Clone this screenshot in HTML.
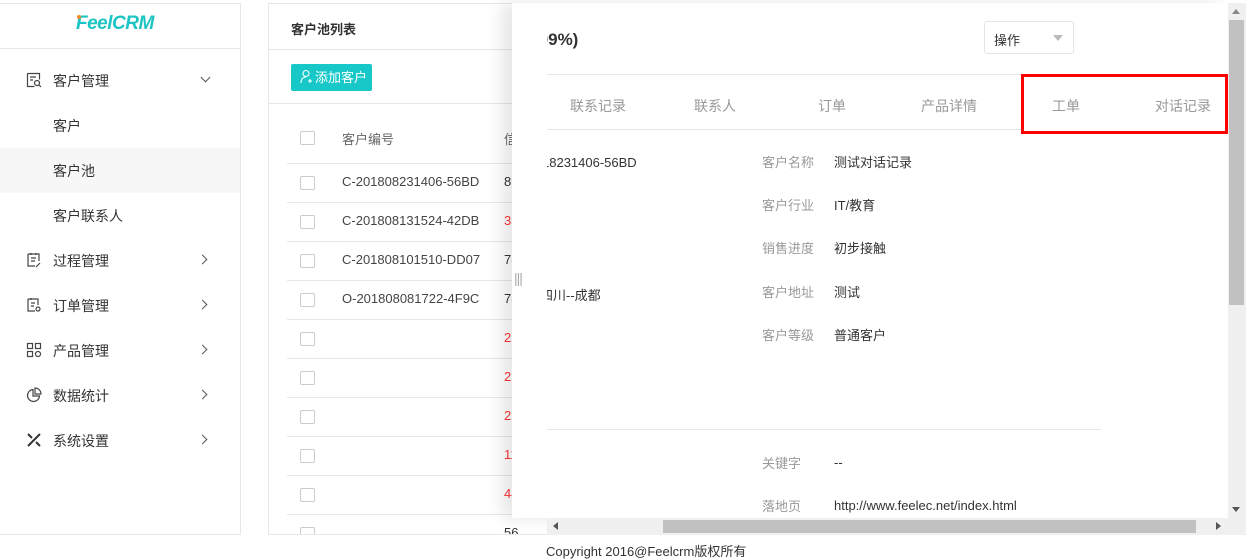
<!DOCTYPE html>
<html><head><meta charset="utf-8"><style>
*{margin:0;padding:0;box-sizing:border-box}
body{width:1246px;height:559px;overflow:hidden;background:#fff;font-family:"Liberation Sans","Noto Sans CJK SC",sans-serif;font-size:13px;color:#333;position:relative}
.a{position:absolute;white-space:nowrap}
.side{position:absolute;left:0;top:3px;width:241px;height:532px;border:1px solid #e4e8ee;border-left:none}
.main{position:absolute;left:268px;top:3px;width:300px;height:532px;border:1px solid #e4e8ee;border-right:none;overflow:hidden}
.hl{position:absolute;height:1px;background:#e6e6e6}
.cb{position:absolute;width:15px;height:14px;border:1px solid #ccc;border-radius:2px;background:#fff}
.chev{position:absolute;width:7px;height:7px;border-right:1.3px solid #555;border-bottom:1.3px solid #555}
.drawer{position:absolute;left:512px;top:3px;width:716px;height:515px;background:#fff;box-shadow:-10px 0 16px rgba(0,0,0,.10)}
.clip{position:absolute;left:547px;top:3px;width:681px;height:515px;overflow:hidden}
.lab{color:#999}
.tab{color:#999;font-size:14px}
</style></head><body>
<div class="side"></div>
<div class="a" style="left:76px;top:13px;font-size:19px;font-weight:bold;font-style:italic;color:#1cc4c4;letter-spacing:-0.5px">FeelCRM</div>
<div class="a" style="left:77px;top:15px;width:4px;height:4px;background:#f08a24;border-radius:2px"></div>
<div class="hl" style="left:0;top:48px;width:240px;background:#e4e8ee"></div>
<div class="a" style="left:0;top:148px;width:240px;height:45px;background:#f7f7f7"></div>
<svg class="a" style="left:26px;top:72px" width="16" height="16" viewBox="0 0 16 16" fill="none" stroke="#444" stroke-width="1.2"><path d="M1.5 1.5h12v6M1.5 1.5v13h7M4 5h6M4 8h3"/><circle cx="11" cy="11" r="2.5"/><path d="M13 13l2 2"/></svg>
<div class="a" style="left:53px;top:71px;font-size:14px">客户管理</div>
<div class="chev" style="left:202px;top:74px;transform:rotate(45deg)"></div>
<div class="a" style="left:53px;top:116px;font-size:14px">客户</div>
<div class="a" style="left:53px;top:161px;font-size:14px">客户池</div>
<div class="a" style="left:53px;top:206px;font-size:14px">客户联系人</div>
<svg class="a" style="left:26px;top:252px" width="16" height="16" viewBox="0 0 16 16" fill="none" stroke="#444" stroke-width="1.2"><path d="M2 2h11v7M2 2v12h7M5 1v2M10 1v2M5 6h5M5 9h4M10 15l4-4"/></svg>
<div class="a" style="left:53px;top:251px;font-size:14px">过程管理</div>
<svg class="a" style="left:26px;top:297px" width="16" height="16" viewBox="0 0 16 16" fill="none" stroke="#444" stroke-width="1.2"><path d="M2 2h10v6M2 2v12h7M5 1v2M5 6h4M5 9h3"/><circle cx="12" cy="12" r="2"/></svg>
<div class="a" style="left:53px;top:296px;font-size:14px">订单管理</div>
<svg class="a" style="left:26px;top:342px" width="16" height="16" viewBox="0 0 16 16" fill="none" stroke="#444" stroke-width="1.2"><rect x="1.5" y="1.5" width="5" height="5"/><rect x="9.5" y="1.5" width="5" height="5"/><rect x="1.5" y="9.5" width="5" height="5"/><circle cx="12" cy="12" r="2.5"/></svg>
<div class="a" style="left:53px;top:341px;font-size:14px">产品管理</div>
<svg class="a" style="left:26px;top:387px" width="16" height="16" viewBox="0 0 16 16" fill="none" stroke="#444" stroke-width="1.2"><path d="M7 2.5a6 6 0 1 0 6.5 6.5H7z"/><path d="M9 1v6h6a6 6 0 0 0-6-6z"/></svg>
<div class="a" style="left:53px;top:386px;font-size:14px">数据统计</div>
<svg class="a" style="left:26px;top:432px" width="16" height="16" viewBox="0 0 16 16" fill="none" stroke="#333" stroke-width="2"><path d="M2 14L14 2M2 2l4 4M10 10l4 4"/></svg>
<div class="a" style="left:53px;top:431px;font-size:14px">系统设置</div>
<div class="chev" style="left:199px;top:256px;transform:rotate(-45deg)"></div>
<div class="chev" style="left:199px;top:301px;transform:rotate(-45deg)"></div>
<div class="chev" style="left:199px;top:346px;transform:rotate(-45deg)"></div>
<div class="chev" style="left:199px;top:391px;transform:rotate(-45deg)"></div>
<div class="chev" style="left:199px;top:436px;transform:rotate(-45deg)"></div>

<div class="main" id="main">
<div class="a" style="left:22px;top:15px;font-weight:bold">客户池列表</div>
<div class="hl" style="left:0;top:45px;width:300px"></div>
<div class="a" style="left:22px;top:60px;width:81px;height:27px;background:#18c8c8;border-radius:2px;color:#fff;font-size:13px;line-height:27px;padding-left:24px">添加客户</div>
<svg class="a" style="left:31px;top:65px" width="14" height="15" viewBox="0 0 14 15" fill="none" stroke="#fff" stroke-width="1.1"><circle cx="6" cy="4.5" r="3"/><path d="M1 14c0-4 2-6 5-6M10 10v4M8 12h4"/></svg>
<div class="hl" style="left:0;top:99px;width:300px"></div>
<div class="cb" style="left:31px;top:127px"></div>
<div class="a" style="left:73px;top:125px;color:#666">客户编号</div>
<div class="a" style="left:235px;top:125px;color:#666">信</div>
<div class="hl" style="left:18px;top:159px;width:230px"></div>
</div>

<div class="drawer"></div>
<div class="a" style="left:514px;top:270px;color:#aaa;font-size:14px;letter-spacing:-1px">|||</div>
<div class="clip">
<div class="a" style="left:-14px;top:27px;font-size:17px;font-weight:bold">(99%)</div>
<div class="a" style="left:-5px;top:152px">18231406-56BD</div>
<div class="a" style="left:-7px;top:282px">四川--成都</div>
</div>
<div class="a" style="left:984px;top:21px;width:90px;height:33px;border:1px solid #e4e4e4;border-radius:3px"></div>
<div class="a" style="left:994px;top:30px">操作</div>
<div class="a" style="left:1053px;top:35px;border:5px solid transparent;border-top:6px solid #bbb"></div>
<div class="hl" style="left:547px;top:74px;width:681px"></div>
<div class="a tab" style="left:570px;top:96px">联系记录</div>
<div class="a tab" style="left:694px;top:96px">联系人</div>
<div class="a tab" style="left:818px;top:96px">订单</div>
<div class="a tab" style="left:921px;top:96px">产品详情</div>
<div class="a tab" style="left:1052px;top:96px">工单</div>
<div class="a tab" style="left:1155px;top:96px">对话记录</div>
<div class="hl" style="left:547px;top:129px;width:474px"></div>
<div class="a" style="left:1021px;top:74px;width:207px;height:60px;border:3px solid #f00"></div>
<div class="a lab" style="left:762px;top:152px">客户名称</div><div class="a" style="left:834px;top:152px">测试对话记录</div>
<div class="a lab" style="left:762px;top:195px">客户行业</div><div class="a" style="left:834px;top:195px">IT/教育</div>
<div class="a lab" style="left:762px;top:238px">销售进度</div><div class="a" style="left:834px;top:238px">初步接触</div>
<div class="a lab" style="left:762px;top:282px">客户地址</div><div class="a" style="left:834px;top:282px">测试</div>
<div class="a lab" style="left:762px;top:325px">客户等级</div><div class="a" style="left:834px;top:325px">普通客户</div>
<div class="hl" style="left:547px;top:429px;width:554px"></div>
<div class="a lab" style="left:762px;top:453px">关键字</div><div class="a" style="left:834px;top:455px">--</div>
<div class="a lab" style="left:762px;top:496px">落地页</div><div class="a" style="left:834px;top:498px">http://www.feelec.net/index.html</div>
<div class="a" style="left:1228px;top:3px;width:18px;height:532px;background:#f0f0f0"></div>
<div class="a" style="left:1229px;top:20px;width:15px;height:285px;background:#c1c1c1"></div>
<div class="a" style="left:1232px;top:9px;border:4px solid transparent;border-bottom:5px solid #888;border-top:none"></div>
<div class="a" style="left:1232px;top:507px;border:4px solid transparent;border-top:5px solid #555;border-bottom:none"></div>
<div class="a" style="left:547px;top:518px;width:681px;height:17px;background:#f0f0f0"></div>
<div class="a" style="left:663px;top:520px;width:533px;height:13px;background:#c1c1c1"></div>
<div class="a" style="left:553px;top:522px;border:4px solid transparent;border-right:5px solid #555;border-left:none"></div>
<div class="a" style="left:1216px;top:522px;border:4px solid transparent;border-left:5px solid #555;border-right:none"></div>
<div class="a" style="left:546px;top:541px;font-size:13px">Copyright 2016@Feelcrm版权所有</div>
<script>
var r=[["C-201808231406-56BD","89","#333"],["C-201808131524-42DB","33","#f33"],["C-201808101510-DD07","78","#333"],["O-201808081722-4F9C","78","#333"],["","22","#f33"],["","22","#f33"],["","22","#f33"],["","11","#f33"],["","44","#f33"],["","56","#333"]];
var h="";r.forEach(function(x,i){var y=159+i*39;h+='<div class="cb" style="left:31px;top:'+(y+13)+'px"></div><div class="a" style="left:73px;top:'+(y+11)+'px;color:#444">'+x[0]+'</div><div class="a" style="left:235px;top:'+(y+11)+'px;color:'+x[2]+'">'+x[1]+'</div><div class="hl" style="left:18px;top:'+(y+39)+'px;width:230px"></div>';});
document.getElementById("main").insertAdjacentHTML("beforeend",h);
</script>
</body></html>
